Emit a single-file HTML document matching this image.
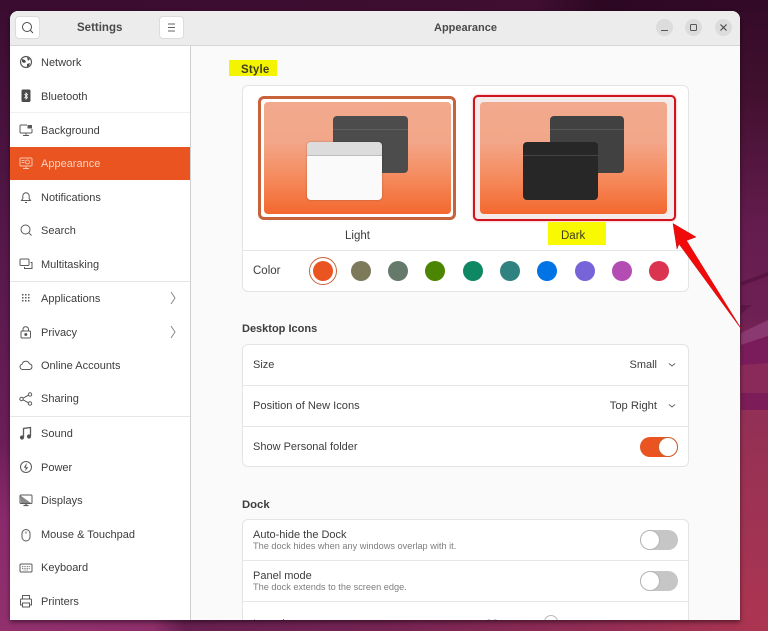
<!DOCTYPE html>
<html><head><meta charset="utf-8">
<style>
html,body{margin:0;padding:0;width:768px;height:631px;overflow:hidden;background:#3d0d30;font-family:"Liberation Sans",sans-serif;}
.a{position:absolute}
#win{left:10px;top:11px;width:730px;height:609px;background:#fafafa;border-radius:8px 8px 0 0;overflow:hidden;box-shadow:0 2px 5px rgba(0,0,0,.5)}
.t{position:absolute;white-space:nowrap;font-size:11px;line-height:14px;color:#3d3d3d;}
.b{font-weight:bold}
.row{position:absolute;left:31px;white-space:nowrap;font-size:11px;line-height:14px;color:#3d3d3d}
.ic{position:absolute;left:8px;width:16px;height:16px;fill:none;stroke:#5a5a5a;stroke-width:1}
.panel{position:absolute;background:#fff;border:1px solid #e4e4e4;border-radius:6px;box-sizing:border-box}
.sep{position:absolute;height:1px;background:#e6e6e6}
.dot{position:absolute;width:20px;height:20px;border-radius:50%;top:250px}
.tg{position:absolute;left:630px;width:38px;height:20px;border-radius:10px;background:#c6c6c6}
.tg i{position:absolute;left:0;top:0;width:18px;height:18px;border:1px solid #b5b5b5;background:#fff;border-radius:50%}
.tg.on{background:#e95420}
.tg.on i{left:18px;border-color:#c9622f}
.btn{position:absolute;top:5px;width:25px;height:23px;background:#fff;border:1px solid #dcdcdc;border-radius:4px;box-sizing:border-box}
.wb{position:absolute;top:8px;width:17px;height:17px;border-radius:50%;background:#dcdcdc}
.pv{position:absolute;border-radius:4px;background:linear-gradient(#f2a98c 0%,#f3a78a 35%,#f58a5c 68%,#f4682f 100%)}
</style></head>
<body>
<svg class="a" style="left:0;top:0" width="768" height="631" viewBox="0 0 768 631">
<defs>
<linearGradient id="l" x1="0" y1="0" x2="0" y2="1"><stop offset="0" stop-color="#3a0c30"/><stop offset=".45" stop-color="#5a1a4e"/><stop offset=".7" stop-color="#6c1e58"/><stop offset=".82" stop-color="#8a2a6c"/><stop offset="1" stop-color="#92306e"/></linearGradient>
<linearGradient id="r" x1="0" y1="0" x2="0" y2="1"><stop offset="0" stop-color="#330a28"/><stop offset=".15" stop-color="#42102f"/><stop offset=".36" stop-color="#641c4e"/><stop offset=".5" stop-color="#6e2054"/><stop offset=".65" stop-color="#923055"/><stop offset="1" stop-color="#ad3552"/></linearGradient>
<linearGradient id="b" x1="0" y1="0" x2="1" y2="0"><stop offset="0" stop-color="#92306e"/><stop offset=".2" stop-color="#8e2e6a"/><stop offset=".24" stop-color="#66204f"/><stop offset=".5" stop-color="#752353"/><stop offset=".75" stop-color="#8f2c54"/><stop offset="1" stop-color="#ad3552"/></linearGradient>
<linearGradient id="t" x1="0" y1="0" x2="1" y2="0"><stop offset="0" stop-color="#3a0c30"/><stop offset=".7" stop-color="#3f0e30"/><stop offset=".78" stop-color="#2c0823"/><stop offset="1" stop-color="#330a28"/></linearGradient>
</defs>
<rect width="768" height="631" fill="url(#r)"/>
<rect x="0" y="0" width="12" height="631" fill="url(#l)"/>
<rect x="0" y="0" width="768" height="12" fill="url(#t)"/>
<rect x="0" y="618" width="768" height="13" fill="url(#b)"/>
<path d="M741 282L768 272V276L741 286Z" fill="#5a1545"/>
<path d="M741 305H752L741 314Z" fill="#5e1748"/>
<path d="M741 333L768 320V336L741 345Z" fill="#8a3a70"/>
<path d="M741 345L768 336V363L741 365Z" fill="#7a1c5c"/>
<path d="M741 365L768 363V393H741Z" fill="#8a2a5a"/>
<path d="M741 393H768V410H741Z" fill="#7c1c58"/>
</svg>

<div id="win" class="a">
  <!-- header -->
  <div class="a" style="left:0;top:0;width:730px;height:34px;background:#ececec;border-bottom:1px solid #d6d6d6;box-sizing:content-box"></div>
  <div class="btn" style="left:5px"><svg width="23" height="21" viewBox="0 0 23 21" fill="none" stroke="#4a4a4a" stroke-width="1"><circle cx="11" cy="10" r="4.5"/><path d="M14.4 13.4L17 16"/></svg></div>
  <div class="t b" style="left:67px;top:10px;font-size:11.5px;color:#4a4a4a">Settings</div>
  <div class="btn" style="left:149px"><svg width="23" height="21" viewBox="0 0 23 21" fill="none" stroke="#666" stroke-width="1"><path d="M8 7h7M8 10.500h7M8 14h7"/></svg></div>
  <div class="t b" style="left:424px;top:10px;color:#4a4a4a;font-size:11px">Appearance</div>
  <div class="wb" style="left:646px"><svg width="17" height="17" fill="none" stroke="#555" stroke-width="1"><path d="M5 11.500h7"/></svg></div>
  <div class="wb" style="left:675px"><svg width="17" height="17" fill="none" stroke="#555" stroke-width="1"><rect x="5.500" y="5.500" width="6" height="6" rx="1"/></svg></div>
  <div class="wb" style="left:705px"><svg width="17" height="17" fill="none" stroke="#444" stroke-width="1.1"><path d="M5.500 5.500l6 6M11.500 5.500l-6 6"/></svg></div>

  <!-- sidebar -->
  <div class="a" style="left:0;top:35px;width:180px;height:574px;background:#fff;border-right:1px solid #cfcfcf"></div>
  <div class="sep" style="left:0;top:101px;width:180px;background:#efefef"></div>
  <div class="sep" style="left:0;top:270px;width:180px"></div>
  <div class="sep" style="left:0;top:405px;width:180px"></div>
  <div class="a" style="left:0;top:136px;width:180px;height:33px;background:#e95420"></div>

  <svg class="ic" style="top:43px" viewBox="0 0 16 16"><circle cx="8" cy="8" r="5.500" stroke-width="1.200"/><path d="M4 5l3 1 1 2-2 1-2-1zM9 3l3 2-2 2zM9 10l3-1-1 3-2 1z" fill="#4a4a4a" stroke="none"/></svg>
  <div class="row" style="top:45px">Network</div>
  <svg class="ic" style="top:77px" viewBox="0 0 16 16"><rect x="3.500" y="1.500" width="9" height="12.500" rx="1.500" fill="#4a4a4a" stroke="none"/><path d="M6.500 6l3 3.500L8 11V5l1.500 1.500-3 3.500" stroke="#fff" stroke-width=".8"/></svg>
  <div class="row" style="top:79px">Bluetooth</div>
  <svg class="ic" style="top:111px" viewBox="0 0 16 16"><path d="M9 3H3a1 1 0 0 0-1 1v6a1 1 0 0 0 1 1h10a1 1 0 0 0 1-1V7"/><path d="M9.500 3h4.500v3.500h-4.500z" fill="#5a5a5a" stroke="none"/><path d="M8 11v2.500M5 13.500h6"/></svg>
  <div class="row" style="top:113px">Background</div>
  <svg class="ic" style="top:144px;stroke:#f6c3ac" viewBox="0 0 16 16"><rect x="2" y="3" width="12" height="8" rx="1"/><circle cx="9.500" cy="7" r="2"/><path d="M3.500 5.500h3M3.500 7.500h3M8 11v2.500M5 13.500h6"/></svg>
  <div class="row" style="top:146px;color:#f9d3c2">Appearance</div>
  <svg class="ic" style="top:178px" viewBox="0 0 16 16"><path d="M3.500 11.500h9l-1.300-1.800V7a3.200 3.200 0 0 0-6.400 0v2.700zM7 13.500h2"/></svg>
  <div class="row" style="top:180px">Notifications</div>
  <svg class="ic" style="top:211px" viewBox="0 0 16 16"><circle cx="7.500" cy="7.500" r="4.500"/><path d="M10.800 10.800L13.500 13.500"/></svg>
  <div class="row" style="top:213px">Search</div>
  <svg class="ic" style="top:245px" viewBox="0 0 16 16"><rect x="2" y="3" width="9" height="6.500" rx="1"/><path d="M12.500 6.500H14v6H6.500v-1.500"/></svg>
  <div class="row" style="top:247px">Multitasking</div>
  <svg class="ic" style="top:279px;stroke:none;fill:#5a5a5a" viewBox="0 0 16 16"><rect x="4" y="4" width="1.500" height="1.500"/><rect x="7" y="4" width="1.500" height="1.500"/><rect x="10" y="4" width="1.500" height="1.500"/><rect x="4" y="7" width="1.500" height="1.500"/><rect x="7" y="7" width="1.500" height="1.500"/><rect x="10" y="7" width="1.500" height="1.500"/><rect x="4" y="10" width="1.500" height="1.500"/><rect x="7" y="10" width="1.500" height="1.500"/><rect x="10" y="10" width="1.500" height="1.500"/></svg>
  <div class="row" style="top:281px">Applications</div>
  <svg class="a" style="left:158px;top:279px" width="10" height="16" fill="none" stroke="#888" stroke-width="1"><path d="M3 2l4 6-4 6"/></svg>
  <svg class="ic" style="top:313px" viewBox="0 0 16 16"><rect x="3" y="7" width="9.500" height="7" rx="1"/><path d="M5 7V5a2.800 2.800 0 0 1 5.500 0v2"/><circle cx="7.800" cy="10.500" r="1" fill="#4a4a4a"/></svg>
  <div class="row" style="top:315px">Privacy</div>
  <svg class="a" style="left:158px;top:313px" width="10" height="16" fill="none" stroke="#888" stroke-width="1"><path d="M3 2l4 6-4 6"/></svg>
  <svg class="ic" style="top:346px" viewBox="0 0 16 16"><path d="M4.500 12.500a2.700 2.700 0 0 1-.4-5.300 3.800 3.800 0 0 1 7.300-.4 2.900 2.900 0 0 1 .3 5.700z"/></svg>
  <div class="row" style="top:348px">Online Accounts</div>
  <svg class="ic" style="top:380px" viewBox="0 0 16 16"><circle cx="3.500" cy="8" r="1.700"/><circle cx="12" cy="3.500" r="1.700"/><circle cx="12" cy="12.500" r="1.700"/><path d="M5 7.200l5.500-3M5 8.800l5.500 3"/></svg>
  <div class="row" style="top:381px">Sharing</div>
  <svg class="ic" style="top:414px" viewBox="0 0 16 16"><path d="M5.500 12V3.500l7-1V11" stroke-width="1.300"/><circle cx="4" cy="12.500" r="1.600" fill="#4a4a4a"/><circle cx="11" cy="11.500" r="1.600" fill="#4a4a4a"/></svg>
  <div class="row" style="top:416px">Sound</div>
  <svg class="ic" style="top:448px" viewBox="0 0 16 16"><circle cx="8" cy="8" r="5.500"/><path d="M8.700 4.500L6.300 8.500h3.400L7.300 11.500" fill="#4a4a4a" stroke-width=".6"/></svg>
  <div class="row" style="top:450px">Power</div>
  <svg class="ic" style="top:481px" viewBox="0 0 16 16"><rect x="2" y="3" width="12" height="8.500" rx="1"/><path d="M2.500 3.500L13 11H3z" fill="#888" stroke="none"/><path d="M8 11.500v2M5.500 13.500h5" stroke-width="1.300"/></svg>
  <div class="row" style="top:483px">Displays</div>
  <svg class="ic" style="top:516px" viewBox="0 0 16 16"><rect x="4" y="2.500" width="8" height="11.500" rx="4"/><path d="M8 4.500v2"/></svg>
  <div class="row" style="top:517px">Mouse &amp; Touchpad</div>
  <svg class="ic" style="top:549px" viewBox="0 0 16 16"><rect x="2" y="4" width="12" height="8" rx="1"/><path d="M4 6.500h8M4 8.300h8M5.500 10h5" stroke-width=".8" stroke-dasharray="1 .7"/></svg>
  <div class="row" style="top:550px">Keyboard</div>
  <svg class="ic" style="top:582px" viewBox="0 0 16 16"><path d="M4.500 6V2.500h7V6M4 12H2.500V7a1 1 0 0 1 1-1h9a1 1 0 0 1 1 1v5H12"/><rect x="4.500" y="10" width="7" height="4"/></svg>
  <div class="row" style="top:584px">Printers</div>

  <!-- content -->
  <div class="a" style="left:219px;top:49px;width:48px;height:16px;background:#f4f400"></div>
  <div class="t b" style="left:231px;top:52px;font-size:11.5px;color:#3d3d20;letter-spacing:.2px">Style</div>

  <div class="panel" style="left:232px;top:74px;width:447px;height:207px"></div>
  <div class="sep" style="left:233px;top:239px;width:445px"></div>

  <div class="a" style="left:248px;top:85px;width:198px;height:124px;border:3px solid #c8623a;border-radius:6px;box-sizing:border-box;background:#fff"></div>
  <div class="pv" style="left:254px;top:91px;width:187px;height:112px"></div>
  <div class="a" style="left:323px;top:105px;width:75px;height:57px;background:#4c4c4c;border-radius:4px"><div class="a" style="left:0;top:13px;width:75px;height:1px;background:#5e5e5e"></div></div>
  <div class="a" style="left:297px;top:131px;width:75px;height:58px;background:#fafafa;border-radius:4px;overflow:hidden;box-shadow:0 0 2px rgba(0,0,0,.25)"><div style="height:13px;background:#dcdcdc;border-bottom:1px solid #bdbdbd"></div></div>
  <div class="t" style="left:335px;top:218px;font-size:11.5px">Light</div>

  <div class="a" style="left:463px;top:84px;width:203px;height:126px;border:2px solid #d0141f;border-radius:5px;box-sizing:border-box;background:#f3ecea;box-shadow:0 0 2px rgba(200,0,0,.4)"></div>
  <div class="pv" style="left:470px;top:91px;width:187px;height:112px"></div>
  <div class="a" style="left:540px;top:105px;width:74px;height:57px;background:#414141;border-radius:4px"><div class="a" style="left:0;top:13px;width:74px;height:1px;background:#575757"></div></div>
  <div class="a" style="left:513px;top:131px;width:75px;height:58px;background:#272727;border-radius:4px"><div class="a" style="left:0;top:13px;width:75px;height:1px;background:#444"></div></div>
  <div class="a" style="left:538px;top:211px;width:58px;height:23px;background:#f9f900"></div>
  <div class="t" style="left:551px;top:218px;font-size:11.5px;color:#3d3d20">Dark</div>

  <div class="t" style="left:243px;top:253px;font-size:11.5px">Color</div>
  <div class="a" style="left:299px;top:246px;width:28px;height:28px;border:1.500px solid #c8623a;border-radius:50%;box-sizing:border-box"></div>
  <div class="dot" style="left:303px;background:#e95420"></div>
  <div class="dot" style="left:341px;background:#7d7a5c"></div>
  <div class="dot" style="left:378px;background:#667a6c"></div>
  <div class="dot" style="left:415px;background:#4b8501"></div>
  <div class="dot" style="left:453px;background:#0e8763"></div>
  <div class="dot" style="left:490px;background:#308280"></div>
  <div class="dot" style="left:527px;background:#0073e5"></div>
  <div class="dot" style="left:565px;background:#7764d8"></div>
  <div class="dot" style="left:602px;background:#b34cb3"></div>
  <div class="dot" style="left:639px;background:#da3450"></div>

  <div class="t b" style="left:232px;top:311px">Desktop Icons</div>
  <div class="panel" style="left:232px;top:333px;width:447px;height:123px"></div>
  <div class="sep" style="left:233px;top:374px;width:445px"></div>
  <div class="sep" style="left:233px;top:415px;width:445px"></div>
  <div class="t" style="left:243px;top:347px">Size</div>
  <div class="t" style="left:243px;top:388px;font-size:11.100px">Position of New Icons</div>
  <div class="t" style="left:243px;top:429px">Show Personal folder</div>
  <div class="t" style="right:83px;top:347px">Small</div>
  <div class="t" style="right:83px;top:388px;font-size:11.200px">Top Right</div>
  <svg class="a" style="left:656px;top:349px" width="12" height="10" fill="none" stroke="#666" stroke-width="1"><path d="M3 3.500l3 2.500 3-2.500"/></svg>
  <svg class="a" style="left:656px;top:390px" width="12" height="10" fill="none" stroke="#666" stroke-width="1"><path d="M3 3.500l3 2.500 3-2.500"/></svg>
  <div class="tg on" style="top:426px"><i></i></div>

  <div class="t b" style="left:232px;top:487px;font-size:11.300px">Dock</div>
  <div class="panel" style="left:232px;top:508px;width:447px;height:130px"></div>
  <div class="sep" style="left:233px;top:549px;width:445px"></div>
  <div class="sep" style="left:233px;top:590px;width:445px"></div>
  <div class="t" style="left:243px;top:517px">Auto-hide the Dock</div>
  <div class="t" style="left:243px;top:529px;font-size:9.200px;color:#7e7e7e;line-height:12px">The dock hides when any windows overlap with it.</div>
  <div class="t" style="left:243px;top:558px">Panel mode</div>
  <div class="t" style="left:243px;top:570px;font-size:9.200px;color:#7e7e7e;line-height:12px">The dock extends to the screen edge.</div>
  <div class="tg" style="top:519px"><i></i></div>
  <div class="tg" style="top:560px"><i></i></div>
  <div class="t" style="left:243px;top:606px;color:#666">Icon size</div>
  <div class="t" style="left:476px;top:606px;color:#888">32</div>
  <div class="a" style="left:534px;top:604px;width:12px;height:12px;border:1px solid #bbb;border-radius:50%;background:#fff"></div>
</div>

<svg class="a" style="left:0;top:0" width="768" height="631">
<path d="M673 223.500L696 237 686.500 240.500 742 330 679 244 677 249Z" fill="#f10a0a" stroke="#c80808" stroke-width=".5"/>
</svg>
</body></html>
